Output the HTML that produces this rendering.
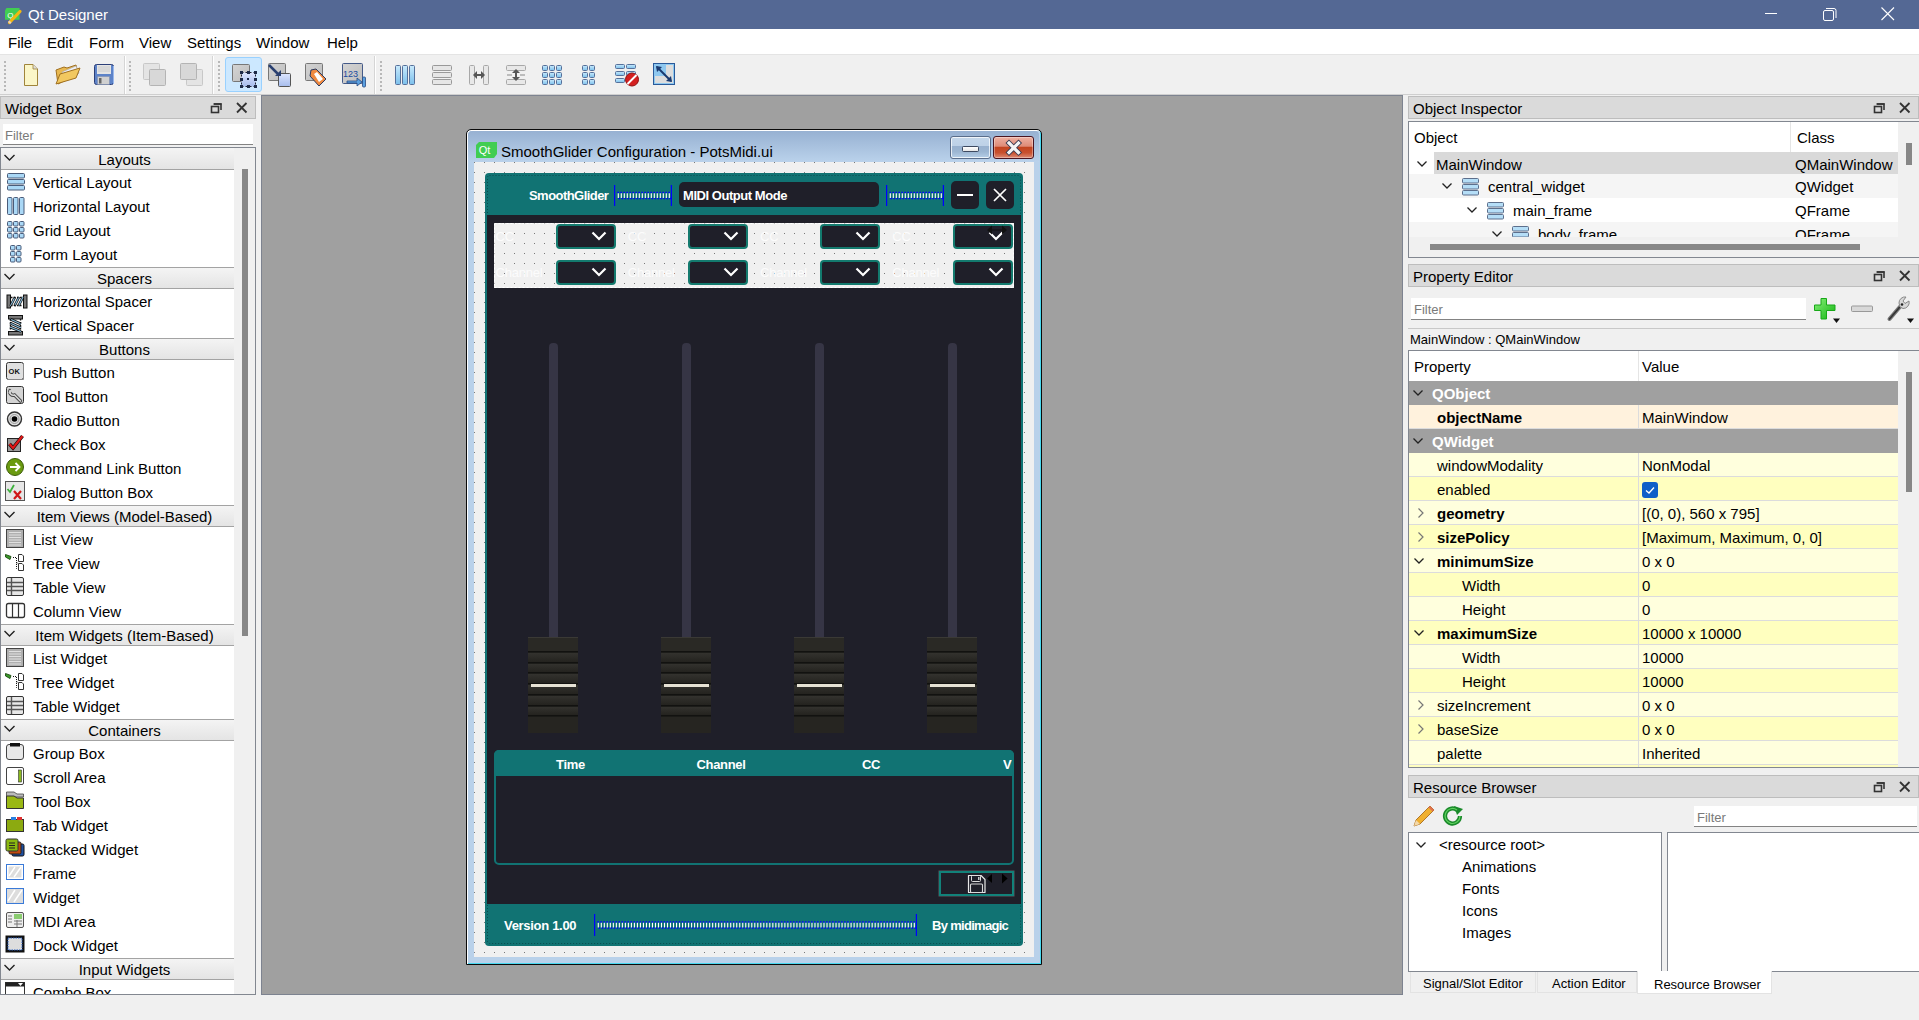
<!DOCTYPE html>
<html><head><meta charset="utf-8"><title>Qt Designer</title>
<style>
*{box-sizing:border-box;margin:0;padding:0}
html,body{width:1919px;height:1020px;overflow:hidden}
body{position:relative;font-family:"Liberation Sans",sans-serif;font-size:15px;color:#000;background:#f0f0f0}
.a{position:absolute}
.t{white-space:pre}
</style></head><body>
<div class="a" style="left:0px;top:0px;width:1919px;height:29px;background:#546894"></div><svg class="a" style="left:3px;top:6px;" width="20" height="19" viewBox="0 0 20 19"><path d="M2 4.5 L3.5 2 H16.5 V13.8 H2 Z" fill="#41cd52"/><text x="4.2" y="11.5" font-family="Liberation Sans" font-size="8" fill="#fff">Q</text><path d="M6.5 16.5 L17 5.5" stroke="#f2b810" stroke-width="3.2" stroke-linecap="round"/><path d="M6 17 L7.5 15.5" stroke="#e8d0c0" stroke-width="3"/></svg><div class="a t" style="left:28px;top:6.30px;font-size:15px;line-height:17px;color:#fff;font-weight:normal;">Qt Designer</div><div class="a" style="left:1765px;top:13px;width:12px;height:1px;background:#fff"></div><svg class="a" style="left:1820px;top:5px;" width="20" height="18" viewBox="0 0 20 18"><rect x="3.5" y="5.5" width="10" height="10" rx="1.5" fill="none" stroke="#fff" stroke-width="1"/><path d="M6 3.5 H14 a2 2 0 0 1 2 2 V13" fill="none" stroke="#fff" stroke-width="1"/></svg><svg class="a" style="left:1880px;top:6px;" width="16" height="16" viewBox="0 0 16 16"><path d="M1.5 1.5 L14 14 M14 1.5 L1.5 14" stroke="#fff" stroke-width="1.1"/></svg><div class="a" style="left:0px;top:29px;width:1919px;height:26px;background:#fff"></div><div class="a t" style="left:8px;top:34.30px;font-size:15px;line-height:17px;color:#000;font-weight:normal;">File</div><div class="a t" style="left:47px;top:34.30px;font-size:15px;line-height:17px;color:#000;font-weight:normal;">Edit</div><div class="a t" style="left:89px;top:34.30px;font-size:15px;line-height:17px;color:#000;font-weight:normal;">Form</div><div class="a t" style="left:139px;top:34.30px;font-size:15px;line-height:17px;color:#000;font-weight:normal;">View</div><div class="a t" style="left:187px;top:34.30px;font-size:15px;line-height:17px;color:#000;font-weight:normal;">Settings</div><div class="a t" style="left:256px;top:34.30px;font-size:15px;line-height:17px;color:#000;font-weight:normal;">Window</div><div class="a t" style="left:327px;top:34.30px;font-size:15px;line-height:17px;color:#000;font-weight:normal;">Help</div><div class="a" style="left:0px;top:54px;width:1919px;height:1px;background:#e4e4e4"></div><div class="a" style="left:0px;top:55px;width:1919px;height:40px;background:#f0f0f0"></div><div class="a" style="left:0px;top:94px;width:1919px;height:1px;background:#cfcfcf"></div><div class="a" style="left:0px;top:995px;width:1919px;height:25px;background:#f0f0f0"></div><div class="a" style="left:261px;top:95px;width:1142px;height:900px;background:#a0a0a0;border:1px solid #7d8390"></div><div class="a" style="left:0px;top:96px;width:256px;height:23px;background:#dadada;border:1px solid #bdbdbd"></div><div class="a t" style="left:5px;top:99.80px;font-size:15px;line-height:17px;color:#000;font-weight:normal;">Widget Box</div><svg class="a" style="left:209px;top:101px;" width="14" height="14" viewBox="0 0 14 14"><rect x="2.5" y="5.5" width="7" height="6" fill="none" stroke="#333" stroke-width="1.6"/><path d="M5 3 H12 V9" fill="none" stroke="#333" stroke-width="1.6"/><rect x="4.5" y="2.2" width="8" height="1.6" fill="#333"/></svg><svg class="a" style="left:235px;top:101px;" width="14" height="14" viewBox="0 0 14 14"><path d="M2 2 L11.5 11.5 M11.5 2 L2 11.5" stroke="#333" stroke-width="1.8"/></svg><div class="a" style="left:3px;top:124px;width:250px;height:21px;background:#fff;border-bottom:1px solid #838383"></div><div class="a t" style="left:5px;top:127.50px;font-size:13px;line-height:15px;color:#7a7a7a;font-weight:normal;">Filter</div><div class="a" style="left:0px;top:147px;width:256px;height:848px;background:#fff;border:1px solid #828790"></div><div class="a" style="left:234px;top:148px;width:21px;height:846px;background:#f0f0f0"></div><div class="a" style="left:242px;top:169px;width:6px;height:467px;background:#878787"></div><svg class="a" style="left:3px;top:60px;" width="4" height="32" viewBox="0 0 4 32"><rect x="1" y="1" width="2" height="2" fill="#b8b8b8"/><rect x="1" y="5" width="2" height="2" fill="#b8b8b8"/><rect x="1" y="9" width="2" height="2" fill="#b8b8b8"/><rect x="1" y="13" width="2" height="2" fill="#b8b8b8"/><rect x="1" y="17" width="2" height="2" fill="#b8b8b8"/><rect x="1" y="21" width="2" height="2" fill="#b8b8b8"/><rect x="1" y="25" width="2" height="2" fill="#b8b8b8"/><rect x="1" y="29" width="2" height="2" fill="#b8b8b8"/></svg><svg class="a" style="left:128px;top:60px;" width="4" height="32" viewBox="0 0 4 32"><rect x="1" y="1" width="2" height="2" fill="#b8b8b8"/><rect x="1" y="5" width="2" height="2" fill="#b8b8b8"/><rect x="1" y="9" width="2" height="2" fill="#b8b8b8"/><rect x="1" y="13" width="2" height="2" fill="#b8b8b8"/><rect x="1" y="17" width="2" height="2" fill="#b8b8b8"/><rect x="1" y="21" width="2" height="2" fill="#b8b8b8"/><rect x="1" y="25" width="2" height="2" fill="#b8b8b8"/><rect x="1" y="29" width="2" height="2" fill="#b8b8b8"/></svg><svg class="a" style="left:217px;top:60px;" width="4" height="32" viewBox="0 0 4 32"><rect x="1" y="1" width="2" height="2" fill="#b8b8b8"/><rect x="1" y="5" width="2" height="2" fill="#b8b8b8"/><rect x="1" y="9" width="2" height="2" fill="#b8b8b8"/><rect x="1" y="13" width="2" height="2" fill="#b8b8b8"/><rect x="1" y="17" width="2" height="2" fill="#b8b8b8"/><rect x="1" y="21" width="2" height="2" fill="#b8b8b8"/><rect x="1" y="25" width="2" height="2" fill="#b8b8b8"/><rect x="1" y="29" width="2" height="2" fill="#b8b8b8"/></svg><svg class="a" style="left:379px;top:60px;" width="4" height="32" viewBox="0 0 4 32"><rect x="1" y="1" width="2" height="2" fill="#b8b8b8"/><rect x="1" y="5" width="2" height="2" fill="#b8b8b8"/><rect x="1" y="9" width="2" height="2" fill="#b8b8b8"/><rect x="1" y="13" width="2" height="2" fill="#b8b8b8"/><rect x="1" y="17" width="2" height="2" fill="#b8b8b8"/><rect x="1" y="21" width="2" height="2" fill="#b8b8b8"/><rect x="1" y="25" width="2" height="2" fill="#b8b8b8"/><rect x="1" y="29" width="2" height="2" fill="#b8b8b8"/></svg><div class="a" style="left:124px;top:56px;width:1px;height:38px;background:#d5d5d5;border-right:1px solid #fff;width:2px"></div><div class="a" style="left:212px;top:56px;width:1px;height:38px;background:#d5d5d5;border-right:1px solid #fff;width:2px"></div><div class="a" style="left:374px;top:56px;width:1px;height:38px;background:#d5d5d5;border-right:1px solid #fff;width:2px"></div><svg class="a" style="left:0px;top:0px;" width="1" height="1" viewBox="0 0 1 1"><defs><linearGradient id="gsq" x1="0" y1="0" x2="1" y2="1"><stop offset="0" stop-color="#d4d4d4"/><stop offset="1" stop-color="#bdbdbd"/></linearGradient><linearGradient id="bsq" x1="0" y1="0" x2="0" y2="1"><stop offset="0" stop-color="#dde6ff"/><stop offset="1" stop-color="#a6bcec"/></linearGradient><linearGradient id="ybl" x1="0" y1="0" x2="0" y2="1"><stop offset="0" stop-color="#c9eafc"/><stop offset="1" stop-color="#7cc0ec"/></linearGradient></defs></svg><svg class="a" style="left:22px;top:62px;" width="18" height="26" viewBox="0 0 18 26"><path d="M2.5 2.5 H11 L15.5 7 V23.5 H2.5 Z" fill="#fbf6c8" stroke="#a0843a"/><path d="M11 2.5 V7 H15.5" fill="#ddd" stroke="#a0843a" stroke-width=".8"/></svg><svg class="a" style="left:54px;top:62px;" width="28" height="26" viewBox="0 0 28 26"><path d="M2 8 L10 5 L13 6 L22 3 L24 12 L4 22 Z" fill="#e8b850" stroke="#a07020"/><path d="M8 10 L22 4 L25 11 L11 18Z" fill="#eef0f8" stroke="#aaa" stroke-width=".6"/><path d="M2 22 L6 12 L26 6 L22 16 Z" fill="#f2c860" stroke="#a07020"/></svg><svg class="a" style="left:92px;top:62px;" width="24" height="26" viewBox="0 0 24 26"><rect x="2.5" y="2.5" width="19" height="20" rx="2" fill="#5d83c8" stroke="#2c3f78"/><rect x="5" y="3" width="14" height="9" fill="#e4e4e4"/><path d="M6 5H18M6 7H18M6 9H18" stroke="#c4c4c4" stroke-width=".8"/><rect x="5.5" y="14.5" width="12" height="8" fill="#d0d0d0" stroke="#8090b0" stroke-width=".6"/><rect x="7" y="16" width="2.5" height="5.5" fill="#666"/><path d="M21.5 4 V22" stroke="#9ab8ec" stroke-width="1"/></svg><svg class="a" style="left:142px;top:62px;" width="26" height="26" viewBox="0 0 26 26"><rect x="1.5" y="1.5" width="16" height="16" rx="1" fill="#e4e4e4" stroke="#c8c8c8"/><rect x="7.5" y="7.5" width="16" height="16" rx="1" fill="#d8d8d8" stroke="#b4b4b4"/></svg><svg class="a" style="left:179px;top:62px;" width="26" height="26" viewBox="0 0 26 26"><rect x="7.5" y="7.5" width="16" height="16" rx="1" fill="#e4e4e4" stroke="#c8c8c8"/><rect x="1.5" y="1.5" width="16" height="16" rx="1" fill="#d8d8d8" stroke="#b4b4b4"/></svg><div class="a" style="left:225px;top:57px;width:37px;height:35px;background:#cce8ff;border:1px solid #99d1ff;border-radius:3px"></div><svg class="a" style="left:230px;top:62px;" width="28" height="28" viewBox="0 0 28 28"><rect x="2.5" y="2.5" width="17" height="17" rx="1" fill="url(#gsq)" stroke="#777"/><rect x="11.5" y="10.5" width="14" height="14" fill="url(#bsq)" stroke="#223" stroke-dasharray="2 2"/><g fill="#1c2a48"><rect x="10" y="9" width="3" height="3"/><rect x="17" y="9" width="3" height="3"/><rect x="24" y="9" width="3" height="3"/><rect x="10" y="16" width="3" height="3"/><rect x="24" y="16" width="3" height="3"/><rect x="10" y="23" width="3" height="3"/><rect x="17" y="23" width="3" height="3"/><rect x="24" y="23" width="3" height="3"/><rect x="17" y="16" width="2" height="2"/></g></svg><svg class="a" style="left:266px;top:62px;" width="28" height="28" viewBox="0 0 28 28"><rect x="2.5" y="1.5" width="17" height="17" rx="1" fill="url(#gsq)" stroke="#777"/><rect x="12.5" y="11.5" width="12" height="13" rx="1" fill="url(#bsq)" stroke="#555"/><path d="M3 3 L13 13" stroke="#2a4070" stroke-width="2.5"/><path d="M9 14 L15 14 L15 8Z" fill="#2a4070"/></svg><svg class="a" style="left:303px;top:62px;" width="28" height="28" viewBox="0 0 28 28"><rect x="2.5" y="1.5" width="17" height="17" rx="1" fill="url(#gsq)" stroke="#777"/><path d="M8 8 L13 7 L23 17 L16 24 L7 14 Z" fill="#f08a40" stroke="#2a3a60"/><path d="M11 12 L14 10 L20 17 L16 20 Z" fill="#fff"/></svg><svg class="a" style="left:340px;top:62px;" width="28" height="28" viewBox="0 0 28 28"><rect x="2.5" y="1.5" width="20" height="20" rx="1" fill="url(#gsq)" stroke="#445a88"/><text x="3" y="15" font-family="Liberation Sans" font-size="9" fill="#1a4aa0">123</text><path d="M7 19 H17 V16 L22 20 L17 24 V21 H7 Z" fill="#5aa0e0" stroke="#2a4a80" stroke-width=".8"/><rect x="22.5" y="15" width="3" height="10" rx="1" fill="#5aa0e0" stroke="#2a4a80" stroke-width=".8"/></svg><svg class="a" style="left:393px;top:63px;" width="28" height="26" viewBox="0 0 28 26"><rect x="2.5" y="2.5" width="5" height="19" rx="1" fill="url(#ybl)" stroke="#56709a"/><rect x="9.5" y="2.5" width="5" height="19" rx="1" fill="url(#ybl)" stroke="#56709a"/><rect x="16.5" y="2.5" width="5" height="19" rx="1" fill="url(#ybl)" stroke="#56709a"/></svg><svg class="a" style="left:430px;top:63px;" width="28" height="26" viewBox="0 0 28 26"><rect x="2.5" y="2.5" width="19" height="5" rx="1" fill="#e6e6e6" stroke="#999"/><rect x="2.5" y="9.5" width="19" height="5" rx="1" fill="#e6e6e6" stroke="#999"/><rect x="2.5" y="16.5" width="19" height="5" rx="1" fill="#e6e6e6" stroke="#999"/></svg><svg class="a" style="left:467px;top:63px;" width="28" height="26" viewBox="0 0 28 26"><rect x="2.5" y="2.5" width="5" height="19" rx="1" fill="#e8e8e8" stroke="#a8a8a8"/><rect x="16.5" y="2.5" width="5" height="19" rx="1" fill="#e8e8e8" stroke="#a8a8a8"/><path d="M7 12 H17" stroke="#555" stroke-width="2"/><path d="M6 12 L10 8 V16Z M18 12 L14 8 V16Z" fill="#555"/></svg><svg class="a" style="left:504px;top:63px;" width="28" height="26" viewBox="0 0 28 26"><rect x="2.5" y="2.5" width="19" height="5" rx="1" fill="#e8e8e8" stroke="#a8a8a8"/><rect x="2.5" y="16.5" width="19" height="5" rx="1" fill="#e8e8e8" stroke="#a8a8a8"/><path d="M12 7 V17" stroke="#555" stroke-width="2"/><path d="M12 6 L8 10 H16Z M12 18 L8 14 H16Z" fill="#555"/><path d="M3 12 H8 M16 12 H21" stroke="#888" stroke-width="1"/></svg><svg class="a" style="left:540px;top:63px;" width="28" height="26" viewBox="0 0 28 26"><rect x="2.5" y="2.5" width="5" height="5" rx="1" fill="url(#ybl)" stroke="#56709a"/><rect x="2.5" y="9.5" width="5" height="5" rx="1" fill="url(#ybl)" stroke="#56709a"/><rect x="2.5" y="16.5" width="5" height="5" rx="1" fill="url(#ybl)" stroke="#56709a"/><rect x="9.5" y="2.5" width="5" height="5" rx="1" fill="url(#ybl)" stroke="#56709a"/><rect x="9.5" y="9.5" width="5" height="5" rx="1" fill="url(#ybl)" stroke="#56709a"/><rect x="9.5" y="16.5" width="5" height="5" rx="1" fill="url(#ybl)" stroke="#56709a"/><rect x="16.5" y="2.5" width="5" height="5" rx="1" fill="url(#ybl)" stroke="#56709a"/><rect x="16.5" y="9.5" width="5" height="5" rx="1" fill="url(#ybl)" stroke="#56709a"/><rect x="16.5" y="16.5" width="5" height="5" rx="1" fill="url(#ybl)" stroke="#56709a"/></svg><svg class="a" style="left:577px;top:63px;" width="28" height="26" viewBox="0 0 28 26"><rect x="5.5" y="2.5" width="5" height="5" rx="1" fill="url(#ybl)" stroke="#56709a"/><rect x="5.5" y="9.5" width="5" height="5" rx="1" fill="url(#ybl)" stroke="#56709a"/><rect x="5.5" y="16.5" width="5" height="5" rx="1" fill="url(#ybl)" stroke="#56709a"/><rect x="12.5" y="2.5" width="5" height="5" rx="1" fill="url(#ybl)" stroke="#56709a"/><rect x="12.5" y="9.5" width="5" height="5" rx="1" fill="url(#ybl)" stroke="#56709a"/><rect x="12.5" y="16.5" width="5" height="5" rx="1" fill="url(#ybl)" stroke="#56709a"/></svg><svg class="a" style="left:613px;top:63px;" width="28" height="26" viewBox="0 0 28 26"><rect x="2.5" y="1.5" width="9" height="4" rx="1" fill="url(#ybl)" stroke="#56709a"/><rect x="13.5" y="1.5" width="9" height="4" rx="1" fill="url(#ybl)" stroke="#56709a"/><rect x="2.5" y="8.5" width="9" height="4" rx="1" fill="url(#ybl)" stroke="#56709a"/><rect x="13.5" y="8.5" width="9" height="4" rx="1" fill="url(#ybl)" stroke="#56709a"/><rect x="2.5" y="15.5" width="9" height="4" rx="1" fill="url(#ybl)" stroke="#56709a"/><rect x="13.5" y="15.5" width="9" height="4" rx="1" fill="url(#ybl)" stroke="#56709a"/><circle cx="19" cy="16.5" r="6.5" fill="#d42020" stroke="#901010"/><path d="M14.5 21 L23.5 12" stroke="#fff" stroke-width="2"/></svg><svg class="a" style="left:652px;top:62px;" width="28" height="28" viewBox="0 0 28 28"><rect x="1.5" y="1.5" width="21" height="21" fill="#8ec8f0" stroke="#2a5a9a"/><rect x="3" y="14" width="18" height="7" fill="#ddd"/><rect x="14" y="3" width="7" height="18" fill="#ddd"/><path d="M5 5 L19 19" stroke="#1a3a70" stroke-width="2"/><path d="M4 4 L10 5 L5 10Z M20 20 L14 19 L19 14Z" fill="#1a3a70"/></svg><div class="a" style="left:1px;top:148px;width:233px;height:846px;overflow:hidden"><div class="a" style="left:0;top:0px;width:233px;height:22px;background:linear-gradient(#f4f4f4,#e4e4e4);border-bottom:1px solid #a3a3a3"></div><svg class="a" style="left:1.5px;top:5px;" width="13" height="10" viewBox="0 0 13 10"><path d="M1.5 2 L6.5 7 L11.5 2" fill="none" stroke="#222" stroke-width="1.4"/></svg><div class="a t" style="left:0;width:247px;text-align:center;top:2.5px;font-size:15px;line-height:17px">Layouts</div><svg class="a" style="left:4px;top:23px;" width="24" height="22" viewBox="0 0 24 22"><rect x="2.5" y="2.5" width="17" height="4.5" rx="1" fill="#aad8f6" stroke="#4a5c7a"/><rect x="2.5" y="8.5" width="17" height="4.5" rx="1" fill="#aad8f6" stroke="#4a5c7a"/><rect x="2.5" y="14.5" width="17" height="4.5" rx="1" fill="#aad8f6" stroke="#4a5c7a"/></svg><div class="a t" style="left:32px;top:25.5px;font-size:15px;line-height:17px">Vertical Layout</div><svg class="a" style="left:4px;top:47px;" width="24" height="22" viewBox="0 0 24 22"><rect x="2.5" y="2.5" width="4.5" height="17" rx="1" fill="#aad8f6" stroke="#4a5c7a"/><rect x="8.5" y="2.5" width="4.5" height="17" rx="1" fill="#aad8f6" stroke="#4a5c7a"/><rect x="14.5" y="2.5" width="4.5" height="17" rx="1" fill="#aad8f6" stroke="#4a5c7a"/></svg><div class="a t" style="left:32px;top:49.5px;font-size:15px;line-height:17px">Horizontal Layout</div><svg class="a" style="left:4px;top:71px;" width="24" height="22" viewBox="0 0 24 22"><rect x="2.5" y="2.5" width="4.5" height="4.5" rx="1" fill="#aad8f6" stroke="#4a5c7a"/><rect x="2.5" y="8.5" width="4.5" height="4.5" rx="1" fill="#aad8f6" stroke="#4a5c7a"/><rect x="2.5" y="14.5" width="4.5" height="4.5" rx="1" fill="#aad8f6" stroke="#4a5c7a"/><rect x="8.5" y="2.5" width="4.5" height="4.5" rx="1" fill="#aad8f6" stroke="#4a5c7a"/><rect x="8.5" y="8.5" width="4.5" height="4.5" rx="1" fill="#aad8f6" stroke="#4a5c7a"/><rect x="8.5" y="14.5" width="4.5" height="4.5" rx="1" fill="#aad8f6" stroke="#4a5c7a"/><rect x="14.5" y="2.5" width="4.5" height="4.5" rx="1" fill="#aad8f6" stroke="#4a5c7a"/><rect x="14.5" y="8.5" width="4.5" height="4.5" rx="1" fill="#aad8f6" stroke="#4a5c7a"/><rect x="14.5" y="14.5" width="4.5" height="4.5" rx="1" fill="#aad8f6" stroke="#4a5c7a"/></svg><div class="a t" style="left:32px;top:73.5px;font-size:15px;line-height:17px">Grid Layout</div><svg class="a" style="left:4px;top:95px;" width="24" height="22" viewBox="0 0 24 22"><rect x="5.5" y="2.5" width="4.5" height="4.5" rx="1" fill="#aad8f6" stroke="#4a5c7a"/><rect x="5.5" y="8.5" width="4.5" height="4.5" rx="1" fill="#aad8f6" stroke="#4a5c7a"/><rect x="5.5" y="14.5" width="4.5" height="4.5" rx="1" fill="#aad8f6" stroke="#4a5c7a"/><rect x="11.5" y="2.5" width="4.5" height="4.5" rx="1" fill="#aad8f6" stroke="#4a5c7a"/><rect x="11.5" y="8.5" width="4.5" height="4.5" rx="1" fill="#aad8f6" stroke="#4a5c7a"/><rect x="11.5" y="14.5" width="4.5" height="4.5" rx="1" fill="#aad8f6" stroke="#4a5c7a"/></svg><div class="a t" style="left:32px;top:97.5px;font-size:15px;line-height:17px">Form Layout</div><div class="a" style="left:0;top:119px;width:233px;height:22px;background:linear-gradient(#f4f4f4,#e4e4e4);border-top:1px solid #a3a3a3;border-bottom:1px solid #a3a3a3"></div><svg class="a" style="left:1.5px;top:124px;" width="13" height="10" viewBox="0 0 13 10"><path d="M1.5 2 L6.5 7 L11.5 2" fill="none" stroke="#222" stroke-width="1.4"/></svg><div class="a t" style="left:0;width:247px;text-align:center;top:121.5px;font-size:15px;line-height:17px">Spacers</div><svg class="a" style="left:4px;top:142px;" width="24" height="22" viewBox="0 0 24 22"><rect x="2" y="5" width="3.5" height="13" fill="#777" stroke="#111"/><rect x="18.5" y="5" width="3.5" height="13" fill="#777" stroke="#111"/><path d="M5.5 16 L10 7 M9.5 16 L14 7 M13.5 16 L18 7" stroke="#111" stroke-width="2.6"/><path d="M5.5 16 L10 7 M9.5 16 L14 7 M13.5 16 L18 7" stroke="#8cc0e0" stroke-width="1.1"/><path d="M6 7.5 H18 M6 15.5 H18" stroke="#111" stroke-width="1.4" stroke-dasharray="1.5 1.5"/></svg><div class="a t" style="left:32px;top:144.5px;font-size:15px;line-height:17px">Horizontal Spacer</div><svg class="a" style="left:4px;top:166px;" width="24" height="22" viewBox="0 0 24 22"><rect x="3.5" y="1.5" width="14" height="3.5" fill="#777" stroke="#111"/><rect x="3.5" y="17.5" width="14" height="3.5" fill="#777" stroke="#111"/><path d="M5 5 L16 10 M5 9 L16 14 M5 13 L16 17.5" stroke="#111" stroke-width="2.6"/><path d="M5 5 L16 10 M5 9 L16 14 M5 13 L16 17.5" stroke="#8cc0e0" stroke-width="1.1"/><path d="M5.5 5 V17 M15.5 5 V17" stroke="#111" stroke-width="1.4" stroke-dasharray="1.5 1.5"/></svg><div class="a t" style="left:32px;top:168.5px;font-size:15px;line-height:17px">Vertical Spacer</div><div class="a" style="left:0;top:190px;width:233px;height:22px;background:linear-gradient(#f4f4f4,#e4e4e4);border-top:1px solid #a3a3a3;border-bottom:1px solid #a3a3a3"></div><svg class="a" style="left:1.5px;top:195px;" width="13" height="10" viewBox="0 0 13 10"><path d="M1.5 2 L6.5 7 L11.5 2" fill="none" stroke="#222" stroke-width="1.4"/></svg><div class="a t" style="left:0;width:247px;text-align:center;top:192.5px;font-size:15px;line-height:17px">Buttons</div><svg class="a" style="left:4px;top:213px;" width="24" height="22" viewBox="0 0 24 22"><rect x="1.5" y="1.5" width="17" height="17" rx="2" fill="#e0e0e0" stroke="#333"/><path d="M2 18.5 H18.5 V2" fill="none" stroke="#888" stroke-width="1"/><text x="3.6" y="12.8" font-family="Liberation Sans" font-size="7.5" font-weight="bold" fill="#111">OK</text></svg><div class="a t" style="left:32px;top:215.5px;font-size:15px;line-height:17px">Push Button</div><svg class="a" style="left:4px;top:237px;" width="24" height="22" viewBox="0 0 24 22"><rect x="1.5" y="1.5" width="17" height="17" rx="2" fill="#d4d4d4" stroke="#333"/><path d="M5 5.5 a3.5 3.5 0 0 0 4.5 4.5 L15.5 16" fill="none" stroke="#444" stroke-width="3.4" stroke-linecap="round"/><path d="M5 5.5 a3.5 3.5 0 0 0 4.5 4.5 L15.5 16" fill="none" stroke="#d8d8d8" stroke-width="1.6" stroke-linecap="round"/><path d="M4 8 L8 4" stroke="#d4d4d4" stroke-width="2.2"/></svg><div class="a t" style="left:32px;top:239.5px;font-size:15px;line-height:17px">Tool Button</div><svg class="a" style="left:4px;top:261px;" width="24" height="22" viewBox="0 0 24 22"><circle cx="9.5" cy="10" r="7" fill="#e0e0e0" stroke="#333" stroke-width="1.4"/><circle cx="9.5" cy="10" r="4.5" fill="none" stroke="#999" stroke-width="1"/><circle cx="9.5" cy="10" r="2.8" fill="#000"/></svg><div class="a t" style="left:32px;top:263.5px;font-size:15px;line-height:17px">Radio Button</div><svg class="a" style="left:4px;top:285px;" width="24" height="22" viewBox="0 0 24 22"><rect x="2.5" y="5.5" width="13" height="13" fill="#9a9a9a" stroke="#222"/><path d="M4.5 11 L8 15 L17.5 3" fill="none" stroke="#1a0a0a" stroke-width="3.6"/><path d="M4.5 11 L8 15 L17.5 3" fill="none" stroke="#e01818" stroke-width="2.2"/></svg><div class="a t" style="left:32px;top:287.5px;font-size:15px;line-height:17px">Check Box</div><svg class="a" style="left:4px;top:309px;" width="24" height="22" viewBox="0 0 24 22"><circle cx="10" cy="10" r="8.5" fill="#6a9a10" stroke="#3c5c08"/><path d="M5 10 H14 M10.5 6 L14.5 10 L10.5 14" fill="none" stroke="#fff" stroke-width="1.8"/></svg><div class="a t" style="left:32px;top:311.5px;font-size:15px;line-height:17px">Command Link Button</div><svg class="a" style="left:4px;top:333px;" width="24" height="22" viewBox="0 0 24 22"><rect x="0.5" y="0.5" width="19" height="19" fill="#e6e6e6" stroke="#555"/><path d="M2.5 8 L5 11 L9 4" fill="none" stroke="#3cb03c" stroke-width="1.8"/><path d="M9 10 L16 18 M16 10 L9 18" stroke="#d01818" stroke-width="2.2"/></svg><div class="a t" style="left:32px;top:335.5px;font-size:15px;line-height:17px">Dialog Button Box</div><div class="a" style="left:0;top:357px;width:233px;height:22px;background:linear-gradient(#f4f4f4,#e4e4e4);border-top:1px solid #a3a3a3;border-bottom:1px solid #a3a3a3"></div><svg class="a" style="left:1.5px;top:362px;" width="13" height="10" viewBox="0 0 13 10"><path d="M1.5 2 L6.5 7 L11.5 2" fill="none" stroke="#222" stroke-width="1.4"/></svg><div class="a t" style="left:0;width:247px;text-align:center;top:359.5px;font-size:15px;line-height:17px">Item Views (Model-Based)</div><svg class="a" style="left:4px;top:380px;" width="24" height="22" viewBox="0 0 24 22"><rect x="1.5" y="1.5" width="17" height="18" fill="#b0b0b0" stroke="#444"/><path d="M4 4.5H16M4 7H16M4 9.5H16M4 12H16M4 14.5H16M4 17H16" stroke="#e0e0e0" stroke-width="1"/></svg><div class="a t" style="left:32px;top:382.5px;font-size:15px;line-height:17px">List View</div><svg class="a" style="left:4px;top:404px;" width="24" height="22" viewBox="0 0 24 22"><path d="M0.5 2.5 L6 4.5 L5 7.5 L0.5 5Z" fill="#3a9a2a" stroke="#1c4c10" stroke-width=".9"/><path d="M8 5.5 H11.5 V16.5 H13 M11.5 11 H13" fill="none" stroke="#111" stroke-dasharray="1 1"/><path d="M13.5 2.5 H17 L18.5 4 V9.5 H13.5Z" fill="#fff" stroke="#333"/><path d="M13.5 11.5 H17 L18.5 13 V18.5 H13.5Z" fill="#fff" stroke="#333"/></svg><div class="a t" style="left:32px;top:406.5px;font-size:15px;line-height:17px">Tree View</div><svg class="a" style="left:4px;top:428px;" width="24" height="22" viewBox="0 0 24 22"><rect x="1.5" y="1.5" width="17" height="18" rx="1.5" fill="#e8e8e8" stroke="#333"/><path d="M2 6.5H18M2 10.5H18M2 14.5H18M6.5 2V19" stroke="#555" stroke-width="1.4"/></svg><div class="a t" style="left:32px;top:430.5px;font-size:15px;line-height:17px">Table View</div><svg class="a" style="left:4px;top:452px;" width="24" height="22" viewBox="0 0 24 22"><rect x="1.5" y="3.5" width="18" height="14" rx="2" fill="#fff" stroke="#333" stroke-width="1.3"/><path d="M7.5 4V17M13.5 4V17" stroke="#333" stroke-width="1.2"/></svg><div class="a t" style="left:32px;top:454.5px;font-size:15px;line-height:17px">Column View</div><div class="a" style="left:0;top:476px;width:233px;height:22px;background:linear-gradient(#f4f4f4,#e4e4e4);border-top:1px solid #a3a3a3;border-bottom:1px solid #a3a3a3"></div><svg class="a" style="left:1.5px;top:481px;" width="13" height="10" viewBox="0 0 13 10"><path d="M1.5 2 L6.5 7 L11.5 2" fill="none" stroke="#222" stroke-width="1.4"/></svg><div class="a t" style="left:0;width:247px;text-align:center;top:478.5px;font-size:15px;line-height:17px">Item Widgets (Item-Based)</div><svg class="a" style="left:4px;top:499px;" width="24" height="22" viewBox="0 0 24 22"><rect x="1.5" y="1.5" width="17" height="18" fill="#b0b0b0" stroke="#444"/><path d="M4 4.5H16M4 7H16M4 9.5H16M4 12H16M4 14.5H16M4 17H16" stroke="#e0e0e0" stroke-width="1"/></svg><div class="a t" style="left:32px;top:501.5px;font-size:15px;line-height:17px">List Widget</div><svg class="a" style="left:4px;top:523px;" width="24" height="22" viewBox="0 0 24 22"><path d="M0.5 2.5 L6 4.5 L5 7.5 L0.5 5Z" fill="#3a9a2a" stroke="#1c4c10" stroke-width=".9"/><path d="M8 5.5 H11.5 V16.5 H13 M11.5 11 H13" fill="none" stroke="#111" stroke-dasharray="1 1"/><path d="M13.5 2.5 H17 L18.5 4 V9.5 H13.5Z" fill="#fff" stroke="#333"/><path d="M13.5 11.5 H17 L18.5 13 V18.5 H13.5Z" fill="#fff" stroke="#333"/></svg><div class="a t" style="left:32px;top:525.5px;font-size:15px;line-height:17px">Tree Widget</div><svg class="a" style="left:4px;top:547px;" width="24" height="22" viewBox="0 0 24 22"><rect x="1.5" y="1.5" width="17" height="18" rx="1.5" fill="#e8e8e8" stroke="#333"/><path d="M2 6.5H18M2 10.5H18M2 14.5H18M6.5 2V19" stroke="#555" stroke-width="1.4"/></svg><div class="a t" style="left:32px;top:549.5px;font-size:15px;line-height:17px">Table Widget</div><div class="a" style="left:0;top:571px;width:233px;height:22px;background:linear-gradient(#f4f4f4,#e4e4e4);border-top:1px solid #a3a3a3;border-bottom:1px solid #a3a3a3"></div><svg class="a" style="left:1.5px;top:576px;" width="13" height="10" viewBox="0 0 13 10"><path d="M1.5 2 L6.5 7 L11.5 2" fill="none" stroke="#222" stroke-width="1.4"/></svg><div class="a t" style="left:0;width:247px;text-align:center;top:573.5px;font-size:15px;line-height:17px">Containers</div><svg class="a" style="left:4px;top:594px;" width="24" height="22" viewBox="0 0 24 22"><rect x="1.5" y="2.5" width="17" height="15" rx="2.5" fill="#e8e8e8" stroke="#444"/><rect x="5" y="1" width="10" height="3.5" fill="#111"/></svg><div class="a t" style="left:32px;top:596.5px;font-size:15px;line-height:17px">Group Box</div><svg class="a" style="left:4px;top:618px;" width="24" height="22" viewBox="0 0 24 22"><rect x="1.5" y="1.5" width="17" height="17" rx="1.5" fill="#fff" stroke="#444"/><rect x="13.5" y="4" width="3" height="12" fill="#8ab820" stroke="#333" stroke-width=".6"/></svg><div class="a t" style="left:32px;top:620.5px;font-size:15px;line-height:17px">Scroll Area</div><svg class="a" style="left:4px;top:642px;" width="24" height="22" viewBox="0 0 24 22"><path d="M1.5 2 H9 L12 4 H18.5 V7 H1.5Z" fill="#bbb" stroke="#444" stroke-width=".8"/><path d="M1.5 6 H9 L12 8 H18.5 V18.5 H1.5Z" fill="#9ab814" stroke="#333"/></svg><div class="a t" style="left:32px;top:644.5px;font-size:15px;line-height:17px">Tool Box</div><svg class="a" style="left:4px;top:666px;" width="24" height="22" viewBox="0 0 24 22"><rect x="1.5" y="5.5" width="17" height="12" fill="#8caa10" stroke="#333"/><rect x="6" y="3" width="5" height="3" fill="#2a80e0"/><rect x="12" y="3" width="5" height="3" fill="#e03030"/></svg><div class="a t" style="left:32px;top:668.5px;font-size:15px;line-height:17px">Tab Widget</div><svg class="a" style="left:4px;top:690px;" width="24" height="22" viewBox="0 0 24 22"><rect x="7" y="6" width="12" height="12" rx="1.5" fill="#1f4fa0" stroke="#111"/><rect x="4" y="4" width="12" height="12" rx="1.5" fill="#c04a10" stroke="#222"/><rect x="1" y="1" width="12" height="12" rx="1.5" fill="#8ab810" stroke="#333"/><path d="M4 5H10M4 7.5H10M4 10H10" stroke="#222"/></svg><div class="a t" style="left:32px;top:692.5px;font-size:15px;line-height:17px">Stacked Widget</div><svg class="a" style="left:4px;top:714px;" width="24" height="22" viewBox="0 0 24 22"><rect x="1.5" y="2.5" width="17" height="15" fill="#fff" stroke="#3a7ad8"/><rect x="3.5" y="4.5" width="13" height="11" fill="#ddd"/><path d="M4 14 L10 5 M9 15 L16 5" stroke="#fff" stroke-width="1.5"/></svg><div class="a t" style="left:32px;top:716.5px;font-size:15px;line-height:17px">Frame</div><svg class="a" style="left:4px;top:738px;" width="24" height="22" viewBox="0 0 24 22"><rect x="1.5" y="2.5" width="17" height="15" fill="#ddd" stroke="#3a7ad8"/><path d="M3 15 L10 4 M9 16 L17 4" stroke="#fff" stroke-width="1.5"/></svg><div class="a t" style="left:32px;top:740.5px;font-size:15px;line-height:17px">Widget</div><svg class="a" style="left:4px;top:762px;" width="24" height="22" viewBox="0 0 24 22"><rect x="1.5" y="2.5" width="17" height="15" rx="1.5" fill="#eee" stroke="#555"/><rect x="9" y="4" width="8" height="5" fill="#8acc70"/><path d="M3 6H7M3 9H7M3 12H7M9 11H17M9 14H17M12 10V17" stroke="#777"/></svg><div class="a t" style="left:32px;top:764.5px;font-size:15px;line-height:17px">MDI Area</div><svg class="a" style="left:4px;top:786px;" width="24" height="22" viewBox="0 0 24 22"><rect x="0.5" y="1.5" width="19" height="17" fill="#111"/><rect x="3" y="4" width="14" height="12" fill="#ddd" stroke="#2a60c0" stroke-dasharray="1.5 1"/></svg><div class="a t" style="left:32px;top:788.5px;font-size:15px;line-height:17px">Dock Widget</div><div class="a" style="left:0;top:810px;width:233px;height:22px;background:linear-gradient(#f4f4f4,#e4e4e4);border-top:1px solid #a3a3a3;border-bottom:1px solid #a3a3a3"></div><svg class="a" style="left:1.5px;top:815px;" width="13" height="10" viewBox="0 0 13 10"><path d="M1.5 2 L6.5 7 L11.5 2" fill="none" stroke="#222" stroke-width="1.4"/></svg><div class="a t" style="left:0;width:247px;text-align:center;top:812.5px;font-size:15px;line-height:17px">Input Widgets</div><svg class="a" style="left:4px;top:833px;" width="24" height="22" viewBox="0 0 24 22"><rect x="0.5" y="1.5" width="19" height="17" fill="#fff" stroke="#333"/><rect x="0.5" y="1.5" width="19" height="4" fill="#222"/><path d="M13 2 L18 2 L15.5 5Z" fill="#fff"/><rect x="3" y="13" width="14" height="4" fill="#6a9ad0"/></svg><div class="a t" style="left:32px;top:835.5px;font-size:15px;line-height:17px">Combo Box</div></div><div class="a" style="left:466px;top:129px;width:576px;height:836px;background:#b9d1ea;border:1px solid #0a0a0a;border-radius:5px 5px 0 0;box-shadow:inset 1px 1px 0 #fff,inset -1px -1px 0 #48d8f0"></div><div class="a" style="left:468px;top:131px;width:571px;height:31px;background:linear-gradient(#97b1d2,#bad2eb);border-radius:4px 4px 0 0"></div><svg class="a" style="left:476px;top:142px;" width="21" height="16" viewBox="0 0 21 16"><path d="M3 0 H21 V12 L18 16 H0 V3 Z" fill="#41cd52"/><text x="2.8" y="12.3" font-family="Liberation Sans" font-size="11" fill="#fff">Qt</text></svg><div class="a t" style="left:501px;top:143.30px;font-size:15px;line-height:17px;color:#000;font-weight:normal;">SmoothGlider Configuration - PotsMidi.ui</div><div class="a" style="left:950px;top:136px;width:41px;height:23px;background:linear-gradient(#c4d6ea 0%,#bdd1e7 44%,#98b1cf 45%,#9cb6d2 70%,#b6cfe8 100%);border:1px solid #5a6d8a;border-radius:3px;box-shadow:inset 0 0 0 1px rgba(255,255,255,.75)"></div><div class="a" style="left:962px;top:146px;width:17px;height:6px;background:linear-gradient(#fff,#e6e6e6);border:1px solid #3e4a60;border-radius:1.5px"></div><div class="a" style="left:993px;top:136px;width:41px;height:23px;background:linear-gradient(#eeb0a2 0%,#de8a76 45%,#c2421e 46%,#c8502e 75%,#dc8a74 100%);border:1px solid #4a1420;border-radius:3px;box-shadow:inset 0 0 0 1px rgba(255,255,255,.35)"></div><svg class="a" style="left:1004px;top:139px;" width="20" height="18" viewBox="0 0 20 18"><path d="M5 4 L14.5 13.5 M14.5 4 L5 13.5" stroke="#3a3a50" stroke-width="5" stroke-linecap="square"/><path d="M5 4 L14.5 13.5 M14.5 4 L5 13.5" stroke="#f4f4f4" stroke-width="3.2" stroke-linecap="square"/></svg><div class="a" style="left:474px;top:162px;width:560px;height:795px;background-color:#f0f0f0;background-image:radial-gradient(circle at 0.5px 0.5px,#7a7a7a 0.7px,transparent 0.8px);background-size:10px 10px"></div><div class="a" style="left:485px;top:173px;width:538px;height:773px;background:#117373;border-radius:4px"></div><svg class="a" style="left:485px;top:173px;" width="538" height="773" viewBox="0 0 538 773"><rect x="2.5" y="2.5" width="533" height="768" rx="2" fill="none" stroke="#0b4c4e" stroke-width="1" stroke-dasharray="1 2"/></svg><div class="a t" style="left:529px;top:188.00px;font-size:13px;line-height:15px;color:#fff;font-weight:bold;letter-spacing:-0.55px">SmoothGlider</div><svg class="a" style="left:614px;top:185px;" width="58" height="21" viewBox="0 0 58 21"><path d="M0.6 0 V21 M57.4 0 V21" stroke="#0000ff" stroke-width="1.2"/><path d="M3.30 7.50 h1.6 M4.50 13.50 h1.6 M6.30 7.50 h1.6 M7.50 13.50 h1.6 M9.30 7.50 h1.6 M10.50 13.50 h1.6 M12.30 7.50 h1.6 M13.50 13.50 h1.6 M15.30 7.50 h1.6 M16.50 13.50 h1.6 M18.30 7.50 h1.6 M19.50 13.50 h1.6 M21.30 7.50 h1.6 M22.50 13.50 h1.6 M24.30 7.50 h1.6 M25.50 13.50 h1.6 M27.30 7.50 h1.6 M28.50 13.50 h1.6 M30.30 7.50 h1.6 M31.50 13.50 h1.6 M33.30 7.50 h1.6 M34.50 13.50 h1.6 M36.30 7.50 h1.6 M37.50 13.50 h1.6 M39.30 7.50 h1.6 M40.50 13.50 h1.6 M42.30 7.50 h1.6 M43.50 13.50 h1.6 M45.30 7.50 h1.6 M46.50 13.50 h1.6 M48.30 7.50 h1.6 M49.50 13.50 h1.6 M51.30 7.50 h1.6 M52.50 13.50 h1.6 M54.30 7.50 h1.6 M55.50 13.50 h1.6 " stroke="#0000ff" stroke-width="1.6"/><path d="M4.30 8.30 V13.10 M7.30 8.30 V13.10 M10.30 8.30 V13.10 M13.30 8.30 V13.10 M16.30 8.30 V13.10 M19.30 8.30 V13.10 M22.30 8.30 V13.10 M25.30 8.30 V13.10 M28.30 8.30 V13.10 M31.30 8.30 V13.10 M34.30 8.30 V13.10 M37.30 8.30 V13.10 M40.30 8.30 V13.10 M43.30 8.30 V13.10 M46.30 8.30 V13.10 M49.30 8.30 V13.10 M52.30 8.30 V13.10 M55.30 8.30 V13.10 " stroke="#fff" stroke-width="1.1"/></svg><div class="a" style="left:679px;top:182px;width:200px;height:25px;background:#1f1f29;border-radius:5px"></div><div class="a t" style="left:683px;top:187.50px;font-size:13px;line-height:15px;color:#fff;font-weight:bold;letter-spacing:-0.45px">MIDI Output Mode</div><svg class="a" style="left:886px;top:185px;" width="58" height="21" viewBox="0 0 58 21"><path d="M0.6 0 V21 M57.4 0 V21" stroke="#0000ff" stroke-width="1.2"/><path d="M3.30 7.50 h1.6 M4.50 13.50 h1.6 M6.30 7.50 h1.6 M7.50 13.50 h1.6 M9.30 7.50 h1.6 M10.50 13.50 h1.6 M12.30 7.50 h1.6 M13.50 13.50 h1.6 M15.30 7.50 h1.6 M16.50 13.50 h1.6 M18.30 7.50 h1.6 M19.50 13.50 h1.6 M21.30 7.50 h1.6 M22.50 13.50 h1.6 M24.30 7.50 h1.6 M25.50 13.50 h1.6 M27.30 7.50 h1.6 M28.50 13.50 h1.6 M30.30 7.50 h1.6 M31.50 13.50 h1.6 M33.30 7.50 h1.6 M34.50 13.50 h1.6 M36.30 7.50 h1.6 M37.50 13.50 h1.6 M39.30 7.50 h1.6 M40.50 13.50 h1.6 M42.30 7.50 h1.6 M43.50 13.50 h1.6 M45.30 7.50 h1.6 M46.50 13.50 h1.6 M48.30 7.50 h1.6 M49.50 13.50 h1.6 M51.30 7.50 h1.6 M52.50 13.50 h1.6 M54.30 7.50 h1.6 M55.50 13.50 h1.6 " stroke="#0000ff" stroke-width="1.6"/><path d="M4.30 8.30 V13.10 M7.30 8.30 V13.10 M10.30 8.30 V13.10 M13.30 8.30 V13.10 M16.30 8.30 V13.10 M19.30 8.30 V13.10 M22.30 8.30 V13.10 M25.30 8.30 V13.10 M28.30 8.30 V13.10 M31.30 8.30 V13.10 M34.30 8.30 V13.10 M37.30 8.30 V13.10 M40.30 8.30 V13.10 M43.30 8.30 V13.10 M46.30 8.30 V13.10 M49.30 8.30 V13.10 M52.30 8.30 V13.10 M55.30 8.30 V13.10 " stroke="#fff" stroke-width="1.1"/></svg><div class="a" style="left:951px;top:181px;width:28px;height:28px;background:#1f1f29;border-radius:5px"></div><div class="a" style="left:957px;top:194px;width:16px;height:2px;background:#fff"></div><div class="a" style="left:986px;top:181px;width:28px;height:28px;background:#1f1f29;border-radius:5px"></div><svg class="a" style="left:986px;top:181px;" width="28" height="28" viewBox="0 0 28 28"><path d="M8 8 L20 20 M20 8 L8 20" stroke="#fff" stroke-width="1.7"/></svg><div class="a" style="left:487px;top:215px;width:534px;height:689px;background:#1f1f29"></div><div class="a" style="left:494px;top:223px;width:520px;height:65px;background-color:#f0f0f0;background-image:radial-gradient(circle at 0.5px 0.5px,#7a7a7a 0.7px,transparent 0.8px);background-size:10px 10px"></div><svg class="a" style="left:494px;top:223px;" width="520" height="65" viewBox="0 0 520 65"><rect x="0.5" y="0.5" width="519" height="64" fill="none" stroke="#fff" stroke-dasharray="2 2"/></svg><div class="a t" style="left:495.5px;top:228.80px;font-size:13px;line-height:15px;color:#fcfcfc;font-weight:normal;letter-spacing:-0.2px">CC</div><div class="a" style="left:556px;top:224px;width:60px;height:25px;background:#1f1f29;border:2px solid #137a6e;border-radius:4px"></div><svg class="a" style="left:590px;top:230px;" width="18" height="12" viewBox="0 0 18 12"><path d="M2.5 2.5 L9 9 L15.5 2.5" fill="none" stroke="#fff" stroke-width="2.2"/></svg><div class="a t" style="left:627.75px;top:228.80px;font-size:13px;line-height:15px;color:#fcfcfc;font-weight:normal;letter-spacing:-0.2px">CC</div><div class="a" style="left:688px;top:224px;width:60px;height:25px;background:#1f1f29;border:2px solid #137a6e;border-radius:4px"></div><svg class="a" style="left:722px;top:230px;" width="18" height="12" viewBox="0 0 18 12"><path d="M2.5 2.5 L9 9 L15.5 2.5" fill="none" stroke="#fff" stroke-width="2.2"/></svg><div class="a t" style="left:760.0px;top:228.80px;font-size:13px;line-height:15px;color:#fcfcfc;font-weight:normal;letter-spacing:-0.2px">CC</div><div class="a" style="left:820px;top:224px;width:60px;height:25px;background:#1f1f29;border:2px solid #137a6e;border-radius:4px"></div><svg class="a" style="left:854px;top:230px;" width="18" height="12" viewBox="0 0 18 12"><path d="M2.5 2.5 L9 9 L15.5 2.5" fill="none" stroke="#fff" stroke-width="2.2"/></svg><div class="a t" style="left:892.25px;top:228.80px;font-size:13px;line-height:15px;color:#fcfcfc;font-weight:normal;letter-spacing:-0.2px">CC</div><div class="a" style="left:953px;top:224px;width:60px;height:25px;background:#1f1f29;border:2px solid #137a6e;border-radius:4px"></div><svg class="a" style="left:987px;top:230px;" width="18" height="12" viewBox="0 0 18 12"><path d="M2.5 2.5 L9 9 L15.5 2.5" fill="none" stroke="#fff" stroke-width="2.2"/></svg><div class="a t" style="left:495.5px;top:264.70px;font-size:13px;line-height:15px;color:#fcfcfc;font-weight:normal;letter-spacing:-0.2px">Channel</div><div class="a" style="left:556px;top:260px;width:60px;height:25px;background:#1f1f29;border:2px solid #137a6e;border-radius:4px"></div><svg class="a" style="left:590px;top:266px;" width="18" height="12" viewBox="0 0 18 12"><path d="M2.5 2.5 L9 9 L15.5 2.5" fill="none" stroke="#fff" stroke-width="2.2"/></svg><div class="a t" style="left:627.75px;top:264.70px;font-size:13px;line-height:15px;color:#fcfcfc;font-weight:normal;letter-spacing:-0.2px">Channel</div><div class="a" style="left:688px;top:260px;width:60px;height:25px;background:#1f1f29;border:2px solid #137a6e;border-radius:4px"></div><svg class="a" style="left:722px;top:266px;" width="18" height="12" viewBox="0 0 18 12"><path d="M2.5 2.5 L9 9 L15.5 2.5" fill="none" stroke="#fff" stroke-width="2.2"/></svg><div class="a t" style="left:760.0px;top:264.70px;font-size:13px;line-height:15px;color:#fcfcfc;font-weight:normal;letter-spacing:-0.2px">Channel</div><div class="a" style="left:820px;top:260px;width:60px;height:25px;background:#1f1f29;border:2px solid #137a6e;border-radius:4px"></div><svg class="a" style="left:854px;top:266px;" width="18" height="12" viewBox="0 0 18 12"><path d="M2.5 2.5 L9 9 L15.5 2.5" fill="none" stroke="#fff" stroke-width="2.2"/></svg><div class="a t" style="left:892.25px;top:264.70px;font-size:13px;line-height:15px;color:#fcfcfc;font-weight:normal;letter-spacing:-0.2px">Channel</div><div class="a" style="left:953px;top:260px;width:60px;height:25px;background:#1f1f29;border:2px solid #137a6e;border-radius:4px"></div><svg class="a" style="left:987px;top:266px;" width="18" height="12" viewBox="0 0 18 12"><path d="M2.5 2.5 L9 9 L15.5 2.5" fill="none" stroke="#fff" stroke-width="2.2"/></svg><div class="a" style="left:549px;top:343px;width:9px;height:300px;background:#363545;border-radius:4px"></div><svg class="a" style="left:528px;top:637px;" width="50" height="96" viewBox="0 0 50 96"><defs><linearGradient id="hg" x1="0" y1="0" x2="0" y2="1"><stop offset="0" stop-color="#34332f"/><stop offset="1" stop-color="#24231f"/></linearGradient></defs><rect x="0" y="0" width="50" height="96" fill="#2a2925"/><rect x="0" y="0" width="50" height="1" fill="#3a3935"/><rect x="0" y="15.5" width="50" height="9.5" fill="url(#hg)"/><rect x="0" y="26.5" width="50" height="8.5" fill="url(#hg)"/><rect x="0" y="36.5" width="50" height="9.5" fill="url(#hg)"/><rect x="0" y="47.5" width="50" height="9.5" fill="url(#hg)"/><rect x="0" y="58.5" width="50" height="9.5" fill="url(#hg)"/><rect x="0" y="69.5" width="50" height="8.5" fill="url(#hg)"/><rect x="0" y="14" width="50" height="1.6" fill="#121210"/><rect x="0" y="25" width="50" height="1.6" fill="#121210"/><rect x="0" y="35" width="50" height="1.6" fill="#121210"/><rect x="0" y="46" width="50" height="1.6" fill="#121210"/><rect x="0" y="57" width="50" height="1.6" fill="#121210"/><rect x="0" y="68" width="50" height="1.6" fill="#121210"/><rect x="0" y="78" width="50" height="1.6" fill="#121210"/><rect x="0" y="80" width="50" height="16" fill="#262521"/></svg><div class="a" style="left:531px;top:684px;width:45px;height:2.5px;background:#e6e2d4"></div><div class="a" style="left:682px;top:343px;width:9px;height:300px;background:#363545;border-radius:4px"></div><svg class="a" style="left:661px;top:637px;" width="50" height="96" viewBox="0 0 50 96"><defs><linearGradient id="hg" x1="0" y1="0" x2="0" y2="1"><stop offset="0" stop-color="#34332f"/><stop offset="1" stop-color="#24231f"/></linearGradient></defs><rect x="0" y="0" width="50" height="96" fill="#2a2925"/><rect x="0" y="0" width="50" height="1" fill="#3a3935"/><rect x="0" y="15.5" width="50" height="9.5" fill="url(#hg)"/><rect x="0" y="26.5" width="50" height="8.5" fill="url(#hg)"/><rect x="0" y="36.5" width="50" height="9.5" fill="url(#hg)"/><rect x="0" y="47.5" width="50" height="9.5" fill="url(#hg)"/><rect x="0" y="58.5" width="50" height="9.5" fill="url(#hg)"/><rect x="0" y="69.5" width="50" height="8.5" fill="url(#hg)"/><rect x="0" y="14" width="50" height="1.6" fill="#121210"/><rect x="0" y="25" width="50" height="1.6" fill="#121210"/><rect x="0" y="35" width="50" height="1.6" fill="#121210"/><rect x="0" y="46" width="50" height="1.6" fill="#121210"/><rect x="0" y="57" width="50" height="1.6" fill="#121210"/><rect x="0" y="68" width="50" height="1.6" fill="#121210"/><rect x="0" y="78" width="50" height="1.6" fill="#121210"/><rect x="0" y="80" width="50" height="16" fill="#262521"/></svg><div class="a" style="left:664px;top:684px;width:45px;height:2.5px;background:#e6e2d4"></div><div class="a" style="left:815px;top:343px;width:9px;height:300px;background:#363545;border-radius:4px"></div><svg class="a" style="left:794px;top:637px;" width="50" height="96" viewBox="0 0 50 96"><defs><linearGradient id="hg" x1="0" y1="0" x2="0" y2="1"><stop offset="0" stop-color="#34332f"/><stop offset="1" stop-color="#24231f"/></linearGradient></defs><rect x="0" y="0" width="50" height="96" fill="#2a2925"/><rect x="0" y="0" width="50" height="1" fill="#3a3935"/><rect x="0" y="15.5" width="50" height="9.5" fill="url(#hg)"/><rect x="0" y="26.5" width="50" height="8.5" fill="url(#hg)"/><rect x="0" y="36.5" width="50" height="9.5" fill="url(#hg)"/><rect x="0" y="47.5" width="50" height="9.5" fill="url(#hg)"/><rect x="0" y="58.5" width="50" height="9.5" fill="url(#hg)"/><rect x="0" y="69.5" width="50" height="8.5" fill="url(#hg)"/><rect x="0" y="14" width="50" height="1.6" fill="#121210"/><rect x="0" y="25" width="50" height="1.6" fill="#121210"/><rect x="0" y="35" width="50" height="1.6" fill="#121210"/><rect x="0" y="46" width="50" height="1.6" fill="#121210"/><rect x="0" y="57" width="50" height="1.6" fill="#121210"/><rect x="0" y="68" width="50" height="1.6" fill="#121210"/><rect x="0" y="78" width="50" height="1.6" fill="#121210"/><rect x="0" y="80" width="50" height="16" fill="#262521"/></svg><div class="a" style="left:797px;top:684px;width:45px;height:2.5px;background:#e6e2d4"></div><div class="a" style="left:948px;top:343px;width:9px;height:300px;background:#363545;border-radius:4px"></div><svg class="a" style="left:927px;top:637px;" width="50" height="96" viewBox="0 0 50 96"><defs><linearGradient id="hg" x1="0" y1="0" x2="0" y2="1"><stop offset="0" stop-color="#34332f"/><stop offset="1" stop-color="#24231f"/></linearGradient></defs><rect x="0" y="0" width="50" height="96" fill="#2a2925"/><rect x="0" y="0" width="50" height="1" fill="#3a3935"/><rect x="0" y="15.5" width="50" height="9.5" fill="url(#hg)"/><rect x="0" y="26.5" width="50" height="8.5" fill="url(#hg)"/><rect x="0" y="36.5" width="50" height="9.5" fill="url(#hg)"/><rect x="0" y="47.5" width="50" height="9.5" fill="url(#hg)"/><rect x="0" y="58.5" width="50" height="9.5" fill="url(#hg)"/><rect x="0" y="69.5" width="50" height="8.5" fill="url(#hg)"/><rect x="0" y="14" width="50" height="1.6" fill="#121210"/><rect x="0" y="25" width="50" height="1.6" fill="#121210"/><rect x="0" y="35" width="50" height="1.6" fill="#121210"/><rect x="0" y="46" width="50" height="1.6" fill="#121210"/><rect x="0" y="57" width="50" height="1.6" fill="#121210"/><rect x="0" y="68" width="50" height="1.6" fill="#121210"/><rect x="0" y="78" width="50" height="1.6" fill="#121210"/><rect x="0" y="80" width="50" height="16" fill="#262521"/></svg><div class="a" style="left:930px;top:684px;width:45px;height:2.5px;background:#e6e2d4"></div><div class="a" style="left:494px;top:750px;width:520px;height:115px;background:#1f1f29;border:2px solid #117373;border-radius:5px"></div><div class="a" style="left:494px;top:750px;width:520px;height:26px;background:#117373;border-radius:5px 5px 0 0"></div><div class="a t" style="left:370.5px;width:400px;text-align:center;top:757.00px;font-size:13px;line-height:15px;color:#fff;font-weight:bold;letter-spacing:-0.3px">Time</div><div class="a t" style="left:521px;width:400px;text-align:center;top:757.00px;font-size:13px;line-height:15px;color:#fff;font-weight:bold;letter-spacing:-0.3px">Channel</div><div class="a t" style="left:671px;width:400px;text-align:center;top:757.00px;font-size:13px;line-height:15px;color:#fff;font-weight:bold;letter-spacing:-0.3px">CC</div><div class="a" style="left:1003px;top:754px;width:9px;height:20px;overflow:hidden"><div class="a t" style="left:0;top:2.5px;font-size:13px;line-height:15px;color:#fff;font-weight:bold">V</div></div><div class="a" style="left:939px;top:871px;width:75px;height:25px;background:#1f1f29;border:2px solid #12827a;box-shadow:0 0 0 0.5px rgba(255,255,255,.25)"></div><svg class="a" style="left:966px;top:873px;" width="22" height="22" viewBox="0 0 22 22"><path d="M2.5 2.5 H15 L19 6.5 V19.5 H2.5 Z" fill="none" stroke="#e8e8e8" stroke-width="1.2" stroke-linejoin="round"/><rect x="5.5" y="2.5" width="9" height="6" rx="1" fill="none" stroke="#ddd" stroke-width="1"/><rect x="12" y="4" width="1.5" height="3" fill="#ccc"/><rect x="4.5" y="11" width="12" height="8.5" rx="1" fill="none" stroke="#d8d8d8" stroke-width="1.1"/></svg><svg class="a" style="left:985px;top:872px;" width="26" height="14" viewBox="0 0 26 14"><path d="M2 6.5 L7 2 V11Z" fill="#000"/><path d="M22.6 6.5 L17 1.5 V11.5Z" fill="#000"/></svg><div class="a t" style="left:504px;top:917.50px;font-size:13px;line-height:15px;color:#fff;font-weight:bold;letter-spacing:-0.3px">Version 1.00</div><svg class="a" style="left:594px;top:914px;" width="323" height="22" viewBox="0 0 323 22"><path d="M0.6 0 V22 M322.4 0 V22" stroke="#0000ff" stroke-width="1.2"/><path d="M3.30 8.00 h1.6 M4.50 14.00 h1.6 M6.31 8.00 h1.6 M7.51 14.00 h1.6 M9.32 8.00 h1.6 M10.52 14.00 h1.6 M12.33 8.00 h1.6 M13.53 14.00 h1.6 M15.34 8.00 h1.6 M16.54 14.00 h1.6 M18.35 8.00 h1.6 M19.55 14.00 h1.6 M21.36 8.00 h1.6 M22.56 14.00 h1.6 M24.37 8.00 h1.6 M25.57 14.00 h1.6 M27.38 8.00 h1.6 M28.58 14.00 h1.6 M30.39 8.00 h1.6 M31.59 14.00 h1.6 M33.40 8.00 h1.6 M34.60 14.00 h1.6 M36.41 8.00 h1.6 M37.61 14.00 h1.6 M39.42 8.00 h1.6 M40.62 14.00 h1.6 M42.43 8.00 h1.6 M43.63 14.00 h1.6 M45.44 8.00 h1.6 M46.64 14.00 h1.6 M48.45 8.00 h1.6 M49.65 14.00 h1.6 M51.46 8.00 h1.6 M52.66 14.00 h1.6 M54.47 8.00 h1.6 M55.67 14.00 h1.6 M57.47 8.00 h1.6 M58.67 14.00 h1.6 M60.48 8.00 h1.6 M61.68 14.00 h1.6 M63.49 8.00 h1.6 M64.69 14.00 h1.6 M66.50 8.00 h1.6 M67.70 14.00 h1.6 M69.51 8.00 h1.6 M70.71 14.00 h1.6 M72.52 8.00 h1.6 M73.72 14.00 h1.6 M75.53 8.00 h1.6 M76.73 14.00 h1.6 M78.54 8.00 h1.6 M79.74 14.00 h1.6 M81.55 8.00 h1.6 M82.75 14.00 h1.6 M84.56 8.00 h1.6 M85.76 14.00 h1.6 M87.57 8.00 h1.6 M88.77 14.00 h1.6 M90.58 8.00 h1.6 M91.78 14.00 h1.6 M93.59 8.00 h1.6 M94.79 14.00 h1.6 M96.60 8.00 h1.6 M97.80 14.00 h1.6 M99.61 8.00 h1.6 M100.81 14.00 h1.6 M102.62 8.00 h1.6 M103.82 14.00 h1.6 M105.63 8.00 h1.6 M106.83 14.00 h1.6 M108.63 8.00 h1.6 M109.83 14.00 h1.6 M111.64 8.00 h1.6 M112.84 14.00 h1.6 M114.65 8.00 h1.6 M115.85 14.00 h1.6 M117.66 8.00 h1.6 M118.86 14.00 h1.6 M120.67 8.00 h1.6 M121.87 14.00 h1.6 M123.68 8.00 h1.6 M124.88 14.00 h1.6 M126.69 8.00 h1.6 M127.89 14.00 h1.6 M129.70 8.00 h1.6 M130.90 14.00 h1.6 M132.71 8.00 h1.6 M133.91 14.00 h1.6 M135.72 8.00 h1.6 M136.92 14.00 h1.6 M138.73 8.00 h1.6 M139.93 14.00 h1.6 M141.74 8.00 h1.6 M142.94 14.00 h1.6 M144.75 8.00 h1.6 M145.95 14.00 h1.6 M147.76 8.00 h1.6 M148.96 14.00 h1.6 M150.77 8.00 h1.6 M151.97 14.00 h1.6 M153.78 8.00 h1.6 M154.98 14.00 h1.6 M156.79 8.00 h1.6 M157.99 14.00 h1.6 M159.80 8.00 h1.6 M161.00 14.00 h1.6 M162.80 8.00 h1.6 M164.00 14.00 h1.6 M165.81 8.00 h1.6 M167.01 14.00 h1.6 M168.82 8.00 h1.6 M170.02 14.00 h1.6 M171.83 8.00 h1.6 M173.03 14.00 h1.6 M174.84 8.00 h1.6 M176.04 14.00 h1.6 M177.85 8.00 h1.6 M179.05 14.00 h1.6 M180.86 8.00 h1.6 M182.06 14.00 h1.6 M183.87 8.00 h1.6 M185.07 14.00 h1.6 M186.88 8.00 h1.6 M188.08 14.00 h1.6 M189.89 8.00 h1.6 M191.09 14.00 h1.6 M192.90 8.00 h1.6 M194.10 14.00 h1.6 M195.91 8.00 h1.6 M197.11 14.00 h1.6 M198.92 8.00 h1.6 M200.12 14.00 h1.6 M201.93 8.00 h1.6 M203.13 14.00 h1.6 M204.94 8.00 h1.6 M206.14 14.00 h1.6 M207.95 8.00 h1.6 M209.15 14.00 h1.6 M210.96 8.00 h1.6 M212.16 14.00 h1.6 M213.97 8.00 h1.6 M215.17 14.00 h1.6 M216.97 8.00 h1.6 M218.17 14.00 h1.6 M219.98 8.00 h1.6 M221.18 14.00 h1.6 M222.99 8.00 h1.6 M224.19 14.00 h1.6 M226.00 8.00 h1.6 M227.20 14.00 h1.6 M229.01 8.00 h1.6 M230.21 14.00 h1.6 M232.02 8.00 h1.6 M233.22 14.00 h1.6 M235.03 8.00 h1.6 M236.23 14.00 h1.6 M238.04 8.00 h1.6 M239.24 14.00 h1.6 M241.05 8.00 h1.6 M242.25 14.00 h1.6 M244.06 8.00 h1.6 M245.26 14.00 h1.6 M247.07 8.00 h1.6 M248.27 14.00 h1.6 M250.08 8.00 h1.6 M251.28 14.00 h1.6 M253.09 8.00 h1.6 M254.29 14.00 h1.6 M256.10 8.00 h1.6 M257.30 14.00 h1.6 M259.11 8.00 h1.6 M260.31 14.00 h1.6 M262.12 8.00 h1.6 M263.32 14.00 h1.6 M265.13 8.00 h1.6 M266.33 14.00 h1.6 M268.13 8.00 h1.6 M269.33 14.00 h1.6 M271.14 8.00 h1.6 M272.34 14.00 h1.6 M274.15 8.00 h1.6 M275.35 14.00 h1.6 M277.16 8.00 h1.6 M278.36 14.00 h1.6 M280.17 8.00 h1.6 M281.37 14.00 h1.6 M283.18 8.00 h1.6 M284.38 14.00 h1.6 M286.19 8.00 h1.6 M287.39 14.00 h1.6 M289.20 8.00 h1.6 M290.40 14.00 h1.6 M292.21 8.00 h1.6 M293.41 14.00 h1.6 M295.22 8.00 h1.6 M296.42 14.00 h1.6 M298.23 8.00 h1.6 M299.43 14.00 h1.6 M301.24 8.00 h1.6 M302.44 14.00 h1.6 M304.25 8.00 h1.6 M305.45 14.00 h1.6 M307.26 8.00 h1.6 M308.46 14.00 h1.6 M310.27 8.00 h1.6 M311.47 14.00 h1.6 M313.28 8.00 h1.6 M314.48 14.00 h1.6 M316.29 8.00 h1.6 M317.49 14.00 h1.6 M319.30 8.00 h1.6 M320.50 14.00 h1.6 " stroke="#0000ff" stroke-width="1.6"/><path d="M4.30 8.80 V13.60 M7.31 8.80 V13.60 M10.32 8.80 V13.60 M13.33 8.80 V13.60 M16.34 8.80 V13.60 M19.35 8.80 V13.60 M22.36 8.80 V13.60 M25.37 8.80 V13.60 M28.38 8.80 V13.60 M31.39 8.80 V13.60 M34.40 8.80 V13.60 M37.41 8.80 V13.60 M40.42 8.80 V13.60 M43.43 8.80 V13.60 M46.44 8.80 V13.60 M49.45 8.80 V13.60 M52.46 8.80 V13.60 M55.47 8.80 V13.60 M58.47 8.80 V13.60 M61.48 8.80 V13.60 M64.49 8.80 V13.60 M67.50 8.80 V13.60 M70.51 8.80 V13.60 M73.52 8.80 V13.60 M76.53 8.80 V13.60 M79.54 8.80 V13.60 M82.55 8.80 V13.60 M85.56 8.80 V13.60 M88.57 8.80 V13.60 M91.58 8.80 V13.60 M94.59 8.80 V13.60 M97.60 8.80 V13.60 M100.61 8.80 V13.60 M103.62 8.80 V13.60 M106.63 8.80 V13.60 M109.63 8.80 V13.60 M112.64 8.80 V13.60 M115.65 8.80 V13.60 M118.66 8.80 V13.60 M121.67 8.80 V13.60 M124.68 8.80 V13.60 M127.69 8.80 V13.60 M130.70 8.80 V13.60 M133.71 8.80 V13.60 M136.72 8.80 V13.60 M139.73 8.80 V13.60 M142.74 8.80 V13.60 M145.75 8.80 V13.60 M148.76 8.80 V13.60 M151.77 8.80 V13.60 M154.78 8.80 V13.60 M157.79 8.80 V13.60 M160.80 8.80 V13.60 M163.80 8.80 V13.60 M166.81 8.80 V13.60 M169.82 8.80 V13.60 M172.83 8.80 V13.60 M175.84 8.80 V13.60 M178.85 8.80 V13.60 M181.86 8.80 V13.60 M184.87 8.80 V13.60 M187.88 8.80 V13.60 M190.89 8.80 V13.60 M193.90 8.80 V13.60 M196.91 8.80 V13.60 M199.92 8.80 V13.60 M202.93 8.80 V13.60 M205.94 8.80 V13.60 M208.95 8.80 V13.60 M211.96 8.80 V13.60 M214.97 8.80 V13.60 M217.97 8.80 V13.60 M220.98 8.80 V13.60 M223.99 8.80 V13.60 M227.00 8.80 V13.60 M230.01 8.80 V13.60 M233.02 8.80 V13.60 M236.03 8.80 V13.60 M239.04 8.80 V13.60 M242.05 8.80 V13.60 M245.06 8.80 V13.60 M248.07 8.80 V13.60 M251.08 8.80 V13.60 M254.09 8.80 V13.60 M257.10 8.80 V13.60 M260.11 8.80 V13.60 M263.12 8.80 V13.60 M266.13 8.80 V13.60 M269.13 8.80 V13.60 M272.14 8.80 V13.60 M275.15 8.80 V13.60 M278.16 8.80 V13.60 M281.17 8.80 V13.60 M284.18 8.80 V13.60 M287.19 8.80 V13.60 M290.20 8.80 V13.60 M293.21 8.80 V13.60 M296.22 8.80 V13.60 M299.23 8.80 V13.60 M302.24 8.80 V13.60 M305.25 8.80 V13.60 M308.26 8.80 V13.60 M311.27 8.80 V13.60 M314.28 8.80 V13.60 M317.29 8.80 V13.60 M320.30 8.80 V13.60 " stroke="#fff" stroke-width="1.1"/></svg><div class="a t" style="left:932px;top:918.00px;font-size:13px;line-height:15px;color:#fff;font-weight:bold;letter-spacing:-0.7px">By midimagic</div><svg class="a" style="left:985px;top:224px;" width="24" height="14" viewBox="0 0 24 14"><path d="M2 6 L7 1.5 V10.5Z M22 6 L17 1.5 V10.5Z" fill="#111"/><path d="M7 6 H17" stroke="#111" stroke-width="1"/></svg><div class="a" style="left:1408px;top:96px;width:511px;height:23px;background:#dadada;border:1px solid #bdbdbd"></div><div class="a t" style="left:1413px;top:99.80px;font-size:15px;line-height:17px;color:#000;font-weight:normal;">Object Inspector</div><svg class="a" style="left:1872px;top:101px;" width="14" height="14" viewBox="0 0 14 14"><rect x="2.5" y="5.5" width="7" height="6" fill="none" stroke="#333" stroke-width="1.6"/><path d="M5 3 H12 V9" fill="none" stroke="#333" stroke-width="1.6"/><rect x="4.5" y="2.2" width="8" height="1.6" fill="#333"/></svg><svg class="a" style="left:1898px;top:101px;" width="14" height="14" viewBox="0 0 14 14"><path d="M2 2 L11.5 11.5 M11.5 2 L2 11.5" stroke="#333" stroke-width="1.8"/></svg><div class="a" style="left:1408px;top:121px;width:511px;height:137px;background:#fff;border:1px solid #828790;border-right:none"></div><div class="a t" style="left:1414px;top:128.80px;font-size:15px;line-height:17px;color:#000;font-weight:normal;">Object</div><div class="a" style="left:1790px;top:122px;width:1px;height:30px;background:#e5e5e5"></div><div class="a t" style="left:1797px;top:128.80px;font-size:15px;line-height:17px;color:#000;font-weight:normal;">Class</div><div class="a" style="left:1409px;top:152px;width:489px;height:85px;overflow:hidden"><div class="a" style="left:25px;top:0px;width:464px;height:22px;background:#d9d9d9"></div><svg class="a" style="left:7px;top:7px" width="12" height="10"><path d="M1.5 2.5 L6 7 L10.5 2.5" fill="none" stroke="#222" stroke-width="1.3"/></svg><div class="a t" style="left:27px;top:3.5px;font-size:15px;line-height:17px">MainWindow</div><div class="a t" style="left:386px;top:3.5px;font-size:15px;line-height:17px">QMainWindow</div><div class="a" style="left:0;top:22px;width:489px;height:24px;background:#f5f5f5"></div><svg class="a" style="left:32px;top:29px" width="12" height="10"><path d="M1.5 2.5 L6 7 L10.5 2.5" fill="none" stroke="#222" stroke-width="1.3"/></svg><svg class="a" style="left:51px;top:25px" width="20" height="20"><rect x="2.5" y="1.5" width="16" height="4.5" rx="1" fill="#b5def7" stroke="#5d6f8c"/><rect x="2.5" y="7.5" width="16" height="4.5" rx="1" fill="#b5def7" stroke="#5d6f8c"/><rect x="2.5" y="13.5" width="16" height="4.5" rx="1" fill="#b5def7" stroke="#5d6f8c"/></svg><div class="a t" style="left:79px;top:25.5px;font-size:15px;line-height:17px">central_widget</div><div class="a t" style="left:386px;top:25.5px;font-size:15px;line-height:17px">QWidget</div><svg class="a" style="left:57px;top:53px" width="12" height="10"><path d="M1.5 2.5 L6 7 L10.5 2.5" fill="none" stroke="#222" stroke-width="1.3"/></svg><svg class="a" style="left:76px;top:49px" width="20" height="20"><rect x="2.5" y="1.5" width="16" height="4.5" rx="1" fill="#b5def7" stroke="#5d6f8c"/><rect x="2.5" y="7.5" width="16" height="4.5" rx="1" fill="#b5def7" stroke="#5d6f8c"/><rect x="2.5" y="13.5" width="16" height="4.5" rx="1" fill="#b5def7" stroke="#5d6f8c"/></svg><div class="a t" style="left:104px;top:49.5px;font-size:15px;line-height:17px">main_frame</div><div class="a t" style="left:386px;top:49.5px;font-size:15px;line-height:17px">QFrame</div><div class="a" style="left:0;top:70px;width:489px;height:24px;background:#f5f5f5"></div><svg class="a" style="left:82px;top:77px" width="12" height="10"><path d="M1.5 2.5 L6 7 L10.5 2.5" fill="none" stroke="#222" stroke-width="1.3"/></svg><svg class="a" style="left:101px;top:73px" width="20" height="20"><rect x="2.5" y="1.5" width="16" height="4.5" rx="1" fill="#b5def7" stroke="#5d6f8c"/><rect x="2.5" y="7.5" width="16" height="4.5" rx="1" fill="#b5def7" stroke="#5d6f8c"/><rect x="2.5" y="13.5" width="16" height="4.5" rx="1" fill="#b5def7" stroke="#5d6f8c"/></svg><div class="a t" style="left:129px;top:73.5px;font-size:15px;line-height:17px">body_frame</div><div class="a t" style="left:386px;top:73.5px;font-size:15px;line-height:17px">QFrame</div></div><div class="a" style="left:1430px;top:244px;width:430px;height:6px;background:#878787"></div><div class="a" style="left:1898px;top:122px;width:21px;height:115px;background:#f0f0f0"></div><div class="a" style="left:1906px;top:143px;width:6px;height:22px;background:#878787"></div><div class="a" style="left:1409px;top:237px;width:510px;height:20px;background:#f0f0f0"></div><div class="a" style="left:1430px;top:244px;width:430px;height:6px;background:#878787"></div><div class="a" style="left:1408px;top:264px;width:511px;height:23px;background:#dadada;border:1px solid #bdbdbd"></div><div class="a t" style="left:1413px;top:267.80px;font-size:15px;line-height:17px;color:#000;font-weight:normal;">Property Editor</div><svg class="a" style="left:1872px;top:269px;" width="14" height="14" viewBox="0 0 14 14"><rect x="2.5" y="5.5" width="7" height="6" fill="none" stroke="#333" stroke-width="1.6"/><path d="M5 3 H12 V9" fill="none" stroke="#333" stroke-width="1.6"/><rect x="4.5" y="2.2" width="8" height="1.6" fill="#333"/></svg><svg class="a" style="left:1898px;top:269px;" width="14" height="14" viewBox="0 0 14 14"><path d="M2 2 L11.5 11.5 M11.5 2 L2 11.5" stroke="#333" stroke-width="1.8"/></svg><div class="a" style="left:1411px;top:298px;width:395px;height:22px;background:#fff;border-bottom:1px solid #838383"></div><div class="a t" style="left:1414px;top:302.00px;font-size:13px;line-height:15px;color:#7a7a7a;font-weight:normal;">Filter</div><svg class="a" style="left:1812px;top:296px;" width="32" height="30" viewBox="0 0 32 30"><defs><linearGradient id="pg" x1="0" y1="0" x2="1" y2="1"><stop offset="0" stop-color="#8af07a"/><stop offset="1" stop-color="#10b410"/></linearGradient></defs><path d="M9 2.5 H14.5 V9 H23 V14.5 H14.5 V23 H9 V14.5 H2.5 V9 H9 Z" fill="url(#pg)" stroke="#18a818" stroke-width="1" stroke-linejoin="round"/><path d="M21 22.5 H28 L24.5 27Z" fill="#111"/></svg><svg class="a" style="left:1850px;top:304px;" width="26" height="10" viewBox="0 0 26 10"><rect x="1.5" y="2" width="21" height="5.5" rx="1" fill="#d8d8d8" stroke="#999"/></svg><svg class="a" style="left:1884px;top:294px;" width="35" height="32" viewBox="0 0 35 32"><path d="M5.5 25 L17.5 11" stroke="#777" stroke-width="4" stroke-linecap="round"/><path d="M5.5 25 L17.5 11" stroke="#333" stroke-width="1.6" stroke-linecap="round"/><path d="M16 13 L15 9 a6 6 0 0 1 7 -6 L19 7 L21 9.5 L25 7 a6 6 0 0 1 -6 7.5 Z" fill="#d8d8d8" stroke="#888" stroke-width="1"/><circle cx="18" cy="10.5" r="1.3" fill="#222"/><path d="M23 24.5 H30 L26.5 29Z" fill="#111"/></svg><div class="a" style="left:1408px;top:328px;width:511px;height:23px;background:#f0f0f0;border-top:1px solid #c8c8c8"></div><div class="a t" style="left:1410px;top:331.50px;font-size:13px;line-height:15px;color:#000;font-weight:normal;">MainWindow : QMainWindow</div><div class="a" style="left:1408px;top:350px;width:511px;height:418px;background:#fff;border:1px solid #828790;border-right:none"></div><div class="a t" style="left:1414px;top:358.30px;font-size:15px;line-height:17px;color:#000;font-weight:normal;">Property</div><div class="a" style="left:1638px;top:351px;width:1px;height:30px;background:#e5e5e5"></div><div class="a t" style="left:1642px;top:358.30px;font-size:15px;line-height:17px;color:#000;font-weight:normal;">Value</div><div class="a" style="left:1898px;top:351px;width:21px;height:416px;background:#f0f0f0"></div><div class="a" style="left:1906px;top:372px;width:6px;height:120px;background:#878787"></div><div class="a" style="left:1409px;top:381px;width:489px;height:386px;overflow:hidden"><div class="a" style="left:0;top:0px;width:489px;height:24px;background:#a0a0a0"></div><svg class="a" style="left:3px;top:7px" width="12" height="10"><path d="M1.5 2.5 L6 7 L10.5 2.5" fill="none" stroke="#222" stroke-width="1.3"/></svg><div class="a t" style="left:23px;top:3.5px;font-size:15px;line-height:17px;color:#fff;font-weight:bold">QObject</div><div class="a" style="left:0;top:24px;width:489px;height:24px;background:#fff2dd;border-bottom:1px solid #dcdcdc"></div><div class="a" style="left:229px;top:24px;width:1px;height:24px;background:#dcdcdc"></div><div class="a t" style="left:28px;top:27.5px;font-size:15px;line-height:17px;font-weight:bold">objectName</div><div class="a t" style="left:233px;top:27.5px;font-size:15px;line-height:17px">MainWindow</div><div class="a" style="left:0;top:48px;width:489px;height:24px;background:#a0a0a0"></div><svg class="a" style="left:3px;top:55px" width="12" height="10"><path d="M1.5 2.5 L6 7 L10.5 2.5" fill="none" stroke="#222" stroke-width="1.3"/></svg><div class="a t" style="left:23px;top:51.5px;font-size:15px;line-height:17px;color:#fff;font-weight:bold">QWidget</div><div class="a" style="left:0;top:72px;width:489px;height:24px;background:#ffffdd;border-bottom:1px solid #dcdcdc"></div><div class="a" style="left:229px;top:72px;width:1px;height:24px;background:#dcdcdc"></div><div class="a t" style="left:28px;top:75.5px;font-size:15px;line-height:17px;font-weight:normal">windowModality</div><div class="a t" style="left:233px;top:75.5px;font-size:15px;line-height:17px">NonModal</div><div class="a" style="left:0;top:96px;width:489px;height:24px;background:#ffffbf;border-bottom:1px solid #dcdcdc"></div><div class="a" style="left:229px;top:96px;width:1px;height:24px;background:#dcdcdc"></div><div class="a t" style="left:28px;top:99.5px;font-size:15px;line-height:17px;font-weight:normal">enabled</div><div class="a" style="left:233px;top:101px;width:16px;height:16px;background:#0f5fc8;border-radius:3px"></div><svg class="a" style="left:233px;top:101px" width="16" height="16"><path d="M4 8.5 L7 11 L12 5.5" fill="none" stroke="#fff" stroke-width="1.3"/></svg><div class="a" style="left:0;top:120px;width:489px;height:24px;background:#ffffdd;border-bottom:1px solid #dcdcdc"></div><div class="a" style="left:229px;top:120px;width:1px;height:24px;background:#dcdcdc"></div><svg class="a" style="left:7px;top:126px" width="10" height="12"><path d="M2.5 1.5 L7 6 L2.5 10.5" fill="none" stroke="#777" stroke-width="1.2"/></svg><div class="a t" style="left:28px;top:123.5px;font-size:15px;line-height:17px;font-weight:bold">geometry</div><div class="a t" style="left:233px;top:123.5px;font-size:15px;line-height:17px">[(0, 0), 560 x 795]</div><div class="a" style="left:0;top:144px;width:489px;height:24px;background:#ffffbf;border-bottom:1px solid #dcdcdc"></div><div class="a" style="left:229px;top:144px;width:1px;height:24px;background:#dcdcdc"></div><svg class="a" style="left:7px;top:150px" width="10" height="12"><path d="M2.5 1.5 L7 6 L2.5 10.5" fill="none" stroke="#777" stroke-width="1.2"/></svg><div class="a t" style="left:28px;top:147.5px;font-size:15px;line-height:17px;font-weight:bold">sizePolicy</div><div class="a t" style="left:233px;top:147.5px;font-size:15px;line-height:17px">[Maximum, Maximum, 0, 0]</div><div class="a" style="left:0;top:168px;width:489px;height:24px;background:#ffffdd;border-bottom:1px solid #dcdcdc"></div><div class="a" style="left:229px;top:168px;width:1px;height:24px;background:#dcdcdc"></div><svg class="a" style="left:4px;top:175px" width="12" height="10"><path d="M1.5 2.5 L6 7 L10.5 2.5" fill="none" stroke="#222" stroke-width="1.3"/></svg><div class="a t" style="left:28px;top:171.5px;font-size:15px;line-height:17px;font-weight:bold">minimumSize</div><div class="a t" style="left:233px;top:171.5px;font-size:15px;line-height:17px">0 x 0</div><div class="a" style="left:0;top:192px;width:489px;height:24px;background:#ffffbf;border-bottom:1px solid #dcdcdc"></div><div class="a" style="left:229px;top:192px;width:1px;height:24px;background:#dcdcdc"></div><div class="a t" style="left:53px;top:195.5px;font-size:15px;line-height:17px;font-weight:normal">Width</div><div class="a t" style="left:233px;top:195.5px;font-size:15px;line-height:17px">0</div><div class="a" style="left:0;top:216px;width:489px;height:24px;background:#ffffdd;border-bottom:1px solid #dcdcdc"></div><div class="a" style="left:229px;top:216px;width:1px;height:24px;background:#dcdcdc"></div><div class="a t" style="left:53px;top:219.5px;font-size:15px;line-height:17px;font-weight:normal">Height</div><div class="a t" style="left:233px;top:219.5px;font-size:15px;line-height:17px">0</div><div class="a" style="left:0;top:240px;width:489px;height:24px;background:#ffffbf;border-bottom:1px solid #dcdcdc"></div><div class="a" style="left:229px;top:240px;width:1px;height:24px;background:#dcdcdc"></div><svg class="a" style="left:4px;top:247px" width="12" height="10"><path d="M1.5 2.5 L6 7 L10.5 2.5" fill="none" stroke="#222" stroke-width="1.3"/></svg><div class="a t" style="left:28px;top:243.5px;font-size:15px;line-height:17px;font-weight:bold">maximumSize</div><div class="a t" style="left:233px;top:243.5px;font-size:15px;line-height:17px">10000 x 10000</div><div class="a" style="left:0;top:264px;width:489px;height:24px;background:#ffffdd;border-bottom:1px solid #dcdcdc"></div><div class="a" style="left:229px;top:264px;width:1px;height:24px;background:#dcdcdc"></div><div class="a t" style="left:53px;top:267.5px;font-size:15px;line-height:17px;font-weight:normal">Width</div><div class="a t" style="left:233px;top:267.5px;font-size:15px;line-height:17px">10000</div><div class="a" style="left:0;top:288px;width:489px;height:24px;background:#ffffbf;border-bottom:1px solid #dcdcdc"></div><div class="a" style="left:229px;top:288px;width:1px;height:24px;background:#dcdcdc"></div><div class="a t" style="left:53px;top:291.5px;font-size:15px;line-height:17px;font-weight:normal">Height</div><div class="a t" style="left:233px;top:291.5px;font-size:15px;line-height:17px">10000</div><div class="a" style="left:0;top:312px;width:489px;height:24px;background:#ffffdd;border-bottom:1px solid #dcdcdc"></div><div class="a" style="left:229px;top:312px;width:1px;height:24px;background:#dcdcdc"></div><svg class="a" style="left:7px;top:318px" width="10" height="12"><path d="M2.5 1.5 L7 6 L2.5 10.5" fill="none" stroke="#777" stroke-width="1.2"/></svg><div class="a t" style="left:28px;top:315.5px;font-size:15px;line-height:17px;font-weight:normal">sizeIncrement</div><div class="a t" style="left:233px;top:315.5px;font-size:15px;line-height:17px">0 x 0</div><div class="a" style="left:0;top:336px;width:489px;height:24px;background:#ffffbf;border-bottom:1px solid #dcdcdc"></div><div class="a" style="left:229px;top:336px;width:1px;height:24px;background:#dcdcdc"></div><svg class="a" style="left:7px;top:342px" width="10" height="12"><path d="M2.5 1.5 L7 6 L2.5 10.5" fill="none" stroke="#777" stroke-width="1.2"/></svg><div class="a t" style="left:28px;top:339.5px;font-size:15px;line-height:17px;font-weight:normal">baseSize</div><div class="a t" style="left:233px;top:339.5px;font-size:15px;line-height:17px">0 x 0</div><div class="a" style="left:0;top:360px;width:489px;height:24px;background:#ffffdd;border-bottom:1px solid #dcdcdc"></div><div class="a" style="left:229px;top:360px;width:1px;height:24px;background:#dcdcdc"></div><div class="a t" style="left:28px;top:363.5px;font-size:15px;line-height:17px;font-weight:normal">palette</div><div class="a t" style="left:233px;top:363.5px;font-size:15px;line-height:17px">Inherited</div><div class="a" style="left:0;top:384px;width:489px;height:24px;background:#ffffbf;border-bottom:1px solid #dcdcdc"></div><div class="a" style="left:229px;top:384px;width:1px;height:24px;background:#dcdcdc"></div><div class="a t" style="left:28px;top:387.5px;font-size:15px;line-height:17px;font-weight:normal"></div></div><div class="a" style="left:1408px;top:775px;width:511px;height:23px;background:#dadada;border:1px solid #bdbdbd"></div><div class="a t" style="left:1413px;top:778.80px;font-size:15px;line-height:17px;color:#000;font-weight:normal;">Resource Browser</div><svg class="a" style="left:1872px;top:780px;" width="14" height="14" viewBox="0 0 14 14"><rect x="2.5" y="5.5" width="7" height="6" fill="none" stroke="#333" stroke-width="1.6"/><path d="M5 3 H12 V9" fill="none" stroke="#333" stroke-width="1.6"/><rect x="4.5" y="2.2" width="8" height="1.6" fill="#333"/></svg><svg class="a" style="left:1898px;top:780px;" width="14" height="14" viewBox="0 0 14 14"><path d="M2 2 L11.5 11.5 M11.5 2 L2 11.5" stroke="#333" stroke-width="1.8"/></svg><svg class="a" style="left:1411px;top:803px;" width="26" height="26" viewBox="0 0 26 26"><path d="M3 23 L5 17 L19 3 L23 7 L9 21 Z" fill="#f0b030" stroke="#a06010" stroke-width=".8"/><path d="M19 3 L23 7 L21.5 8.5 L17.5 4.5Z" fill="#e07050"/><path d="M3 23 L5 17 L9 21Z" fill="#f3d8a8"/></svg><svg class="a" style="left:1441px;top:804px;" width="24" height="24" viewBox="0 0 24 24"><path d="M19 12 a7.5 7.5 0 1 1 -3 -6" fill="none" stroke="#1a8a2a" stroke-width="4.2"/><path d="M13 2 L22 5 L16 11Z" fill="#1a8a2a"/><path d="M19 12 a7.5 7.5 0 1 1 -3 -6" fill="none" stroke="#60d060" stroke-width="1.2"/></svg><div class="a" style="left:1694px;top:806px;width:223px;height:21px;background:#fff;border-bottom:1px solid #838383"></div><div class="a t" style="left:1697px;top:809.50px;font-size:13px;line-height:15px;color:#7a7a7a;font-weight:normal;">Filter</div><div class="a" style="left:1408px;top:832px;width:254px;height:140px;background:#fff;border:1px solid #828790"></div><div class="a" style="left:1667px;top:832px;width:252px;height:140px;background:#fff;border:1px solid #828790;border-right:none"></div><svg class="a" style="left:1415px;top:840px;" width="12" height="10" viewBox="0 0 12 10"><path d="M1.5 2.5 L6 7 L10.5 2.5" fill="none" stroke="#222" stroke-width="1.3"/></svg><div class="a t" style="left:1439px;top:836.30px;font-size:15px;line-height:17px;color:#000;font-weight:normal;">&lt;resource root&gt;</div><div class="a t" style="left:1462px;top:858.30px;font-size:15px;line-height:17px;color:#000;font-weight:normal;">Animations</div><div class="a t" style="left:1462px;top:880.30px;font-size:15px;line-height:17px;color:#000;font-weight:normal;">Fonts</div><div class="a t" style="left:1462px;top:902.30px;font-size:15px;line-height:17px;color:#000;font-weight:normal;">Icons</div><div class="a t" style="left:1462px;top:924.30px;font-size:15px;line-height:17px;color:#000;font-weight:normal;">Images</div><div class="a" style="left:1410px;top:972px;width:126px;height:21px;background:#f0f0f0;border:1px solid #e3e3e3;border-top:none"></div><div class="a t" style="left:1423px;top:975.50px;font-size:13px;line-height:15px;color:#000;font-weight:normal;">Signal/Slot Editor</div><div class="a" style="left:1537px;top:972px;width:100px;height:21px;background:#f0f0f0;border:1px solid #e3e3e3;border-top:none"></div><div class="a t" style="left:1552px;top:975.50px;font-size:13px;line-height:15px;color:#000;font-weight:normal;">Action Editor</div><div class="a" style="left:1637px;top:971px;width:135px;height:23px;background:#fff;border:1px solid #e3e3e3;border-top:none"></div><div class="a t" style="left:1654px;top:976.50px;font-size:13px;line-height:15px;color:#000;font-weight:normal;">Resource Browser</div></body></html>
